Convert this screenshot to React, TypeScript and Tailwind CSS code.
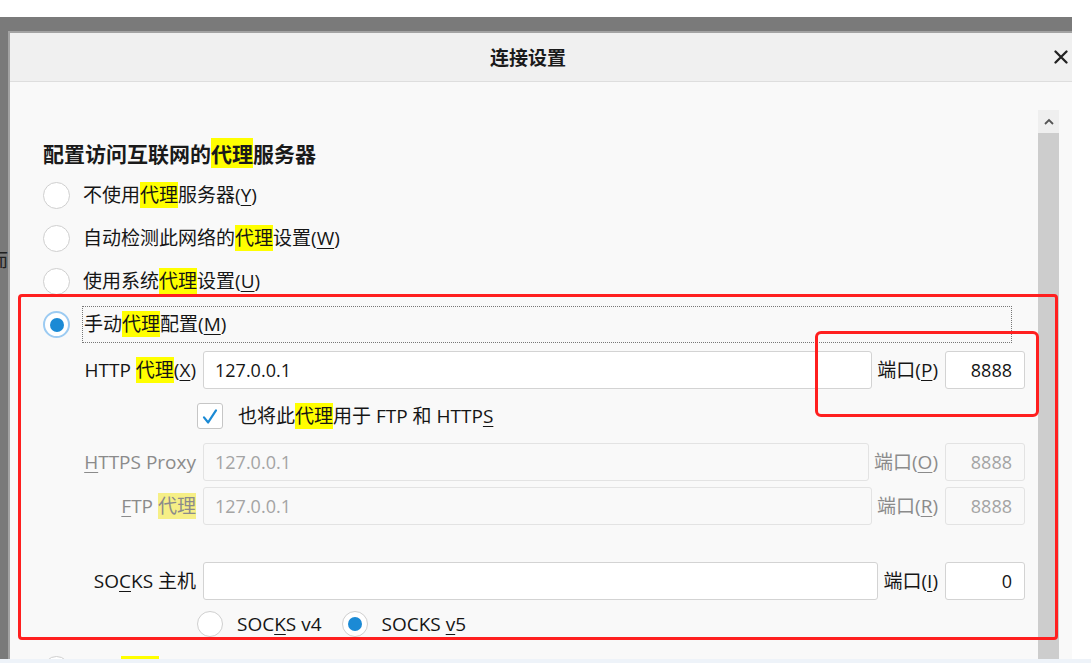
import React from "react";

function Hl({ children, dim }: { children: React.ReactNode; dim?: boolean }) {
  return <span className={dim ? "bg-[#f6ef86]" : "bg-[#ffff00]"}>{children}</span>;
}

function K({ children }: { children: React.ReactNode }) {
  return <u className="underline decoration-1 underline-offset-[3px]">{children}</u>;
}

function Radio({ checked, focus, size = 27 }: { checked?: boolean; focus?: boolean; size?: number }) {
  const cls = size === 27 ? "w-[27px] h-[27px]" : "w-[26px] h-[26px]";
  return (
    <div
      className={`${cls} shrink-0 rounded-full bg-white flex items-center justify-center ${
        focus ? "border-2 border-[#9ccbf2]" : "border-[1.5px] border-[#cfcfcf]"
      }`}
    >
      {checked && <div className="w-[14px] h-[14px] rounded-full bg-[#1b8ad5]" />}
    </div>
  );
}

function Field({
  label,
  value,
  portLabel,
  port,
  disabled,
}: {
  label: React.ReactNode;
  value: string;
  portLabel: React.ReactNode;
  port: string;
  disabled?: boolean;
}) {
  const box = disabled
    ? "bg-[#f9f9f9] border-[#e3e3e3] text-[#a4a4a4]"
    : "bg-white border-[#d3d3d3] text-[#151515]";
  return (
    <div className="h-[38px] shrink-0 flex items-center">
      <div className={`w-[113px] shrink-0 text-right whitespace-nowrap ${disabled ? "text-[#8b8b8b]" : ""}`}>
        {label}
      </div>
      <div
        className={`ml-[7px] flex-1 h-full rounded-[3px] border px-[11px] flex items-center text-[18px] ${box}`}
      >
        {value}
      </div>
      <div className={`ml-[5px] whitespace-nowrap ${disabled ? "text-[#8b8b8b]" : ""}`}>{portLabel}</div>
      <div
        className={`ml-[7px] w-[80px] shrink-0 h-full rounded-[3px] border pr-[12px] flex items-center justify-end text-[18px] ${box}`}
      >
        {port}
      </div>
    </div>
  );
}

export default function App() {
  return (
    <div className="w-[1091px] h-[663px] overflow-hidden relative bg-white flex flex-col font-['Open_Sans','Noto_Sans_CJK_SC',sans-serif] text-[#151515] text-[19px]">
      <div className="h-[17px] shrink-0" />
      <div className="flex flex-1 min-h-0">
        <div className="w-[1072px] shrink-0 bg-[#7a7a7a] flex flex-col pt-[14px] min-h-0">
          <div className="flex flex-1 min-h-0">
            <div className="w-[8px] shrink-0 overflow-hidden relative">
              <span className="absolute top-[215px] left-[-10px] text-[18px] text-[#202020] font-['Noto_Sans_CJK_SC',sans-serif]">
                而
              </span>
            </div>
            <div className="flex-1 flex flex-col min-h-0 border-l-2 border-t-2 border-[#a3a3a3] bg-[#f9f9f9]">
              {/* header */}
              <div className="h-[49px] shrink-0 bg-[#f0f0f0] border-b border-[#dedede] flex items-center">
                <div className="flex-1 text-center pr-[4px] text-[19px] font-bold font-['Noto_Sans_CJK_SC',sans-serif] text-[#1a1a1a]">
                  连接设置
                </div>
                <div className="w-[22px] flex items-center justify-center">
                  <svg width="14" height="14" viewBox="0 0 14 14">
                    <path d="M1.5 1.5 L12.5 12.5 M12.5 1.5 L1.5 12.5" stroke="#222" strokeWidth="2.3" strokeLinecap="round" />
                  </svg>
                </div>
              </div>
              {/* content */}
              <div className="flex flex-1 min-h-0 overflow-hidden">
                <div className="w-[1015px] shrink-0 self-start pl-[33px] pt-[58px] flex flex-col">
                  <div className="h-[28px] shrink-0 flex items-center text-[21px] font-bold font-['Noto_Sans_CJK_SC',sans-serif] text-[#1a1a1a]">
                    <span>
                      配置访问互联网的<Hl>代理</Hl>服务器
                    </span>
                  </div>
                  <div className="mt-[6px] h-[43px] shrink-0 flex items-center gap-[13px]">
                    <Radio />
                    <span>
                      不使用<Hl>代理</Hl>服务器(<K>Y</K>)
                    </span>
                  </div>
                  <div className="h-[43px] shrink-0 flex items-center gap-[13px]">
                    <Radio />
                    <span>
                      自动检测此网络的<Hl>代理</Hl>设置(<K>W</K>)
                    </span>
                  </div>
                  <div className="h-[43px] shrink-0 flex items-center gap-[13px]">
                    <Radio />
                    <span>
                      使用系统<Hl>代理</Hl>设置(<K>U</K>)
                    </span>
                  </div>
                  <div className="h-[43px] shrink-0 flex items-center gap-[12px]">
                    <Radio checked focus />
                    <div className="w-[930px] h-[37px] border border-dotted border-[#777] flex items-center pl-[1px]">
                      <span>
                        手动<Hl>代理</Hl>配置(<K>M</K>)
                      </span>
                    </div>
                  </div>
                  <div className="pl-[40px] shrink-0 flex flex-col">
                    <div className="mt-[5px]">
                      <Field
                        label={
                          <>
                            HTTP <Hl>代理</Hl>(<K>X</K>)
                          </>
                        }
                        value="127.0.0.1"
                        portLabel={
                          <>
                            端口(<K>P</K>)
                          </>
                        }
                        port="8888"
                      />
                    </div>
                    <div className="h-[54px] shrink-0 flex items-center pl-[114px] gap-[15px]">
                      <div className="w-[26px] h-[26px] rounded-[3px] border border-[#c6c6c6] bg-white flex items-center justify-center">
                        <svg width="26" height="26" viewBox="0 0 26 26">
                          <polyline
                            points="6.5,14.5 11,20 19.5,7"
                            fill="none"
                            stroke="#1b8ad5"
                            strokeWidth="2.4"
                            strokeLinecap="round"
                            strokeLinejoin="round"
                          />
                        </svg>
                      </div>
                      <span>
                        也将此<Hl>代理</Hl>用于 FTP 和 HTTP<K>S</K>
                      </span>
                    </div>
                    <Field
                      disabled
                      label={
                        <>
                          <K>H</K>TTPS Proxy
                        </>
                      }
                      value="127.0.0.1"
                      portLabel={
                        <>
                          端口(<K>O</K>)
                        </>
                      }
                      port="8888"
                    />
                    <div className="mt-[6px]">
                      <Field
                        disabled
                        label={
                          <>
                            <K>F</K>TP <Hl dim>代理</Hl>
                          </>
                        }
                        value="127.0.0.1"
                        portLabel={
                          <>
                            端口(<K>R</K>)
                          </>
                        }
                        port="8888"
                      />
                    </div>
                    <div className="mt-[37px]">
                      <Field
                        label={
                          <>
                            SO<K>C</K>KS 主机
                          </>
                        }
                        value=""
                        portLabel={
                          <>
                            端口(<K>I</K>)
                          </>
                        }
                        port="0"
                      />
                    </div>
                    <div className="h-[48px] shrink-0 flex items-center pl-[114px]">
                      <Radio size={26} />
                      <span className="ml-[14px]">
                        SOC<K>K</K>S v4
                      </span>
                      <div className="ml-[20px]">
                        <Radio size={26} checked />
                      </div>
                      <span className="ml-[14px]">
                        SOCKS <K>v</K>5
                      </span>
                    </div>
                  </div>
                  <div className="h-[43px] shrink-0 flex items-center gap-[13px]">
                    <Radio />
                    <span>
                      自动<Hl>代理</Hl>配置的 URL (PAC)
                    </span>
                  </div>
                </div>
                <div className="w-[13px] shrink-0" />
                <div className="w-[21px] shrink-0 pt-[28px] flex flex-col">
                  <div className="h-[23px] shrink-0 bg-[#efefef] flex items-center justify-center">
                    <svg width="10" height="7" viewBox="0 0 10 7">
                      <path d="M1 6 L5 2 L9 6" fill="none" stroke="#555" strokeWidth="1.8" />
                    </svg>
                  </div>
                  <div className="flex-1 bg-[#cdcdcd]" />
                </div>
              </div>
            </div>
          </div>
        </div>
        <div className="flex-1 bg-white" />
      </div>

      {/* annotation overlays */}
      <div className="absolute left-[18px] top-[294px] w-[1040px] h-[346px] border-[3px] border-[#ff1f1f] rounded-[4px] pointer-events-none" />
      <div className="absolute left-[815px] top-[331px] w-[224px] h-[86px] border-[3px] border-[#ff1f1f] rounded-[6px] pointer-events-none" />
      <div className="absolute left-0 right-0 bottom-0 h-[4px] bg-[#eef3f9]" />
    </div>
  );
}
